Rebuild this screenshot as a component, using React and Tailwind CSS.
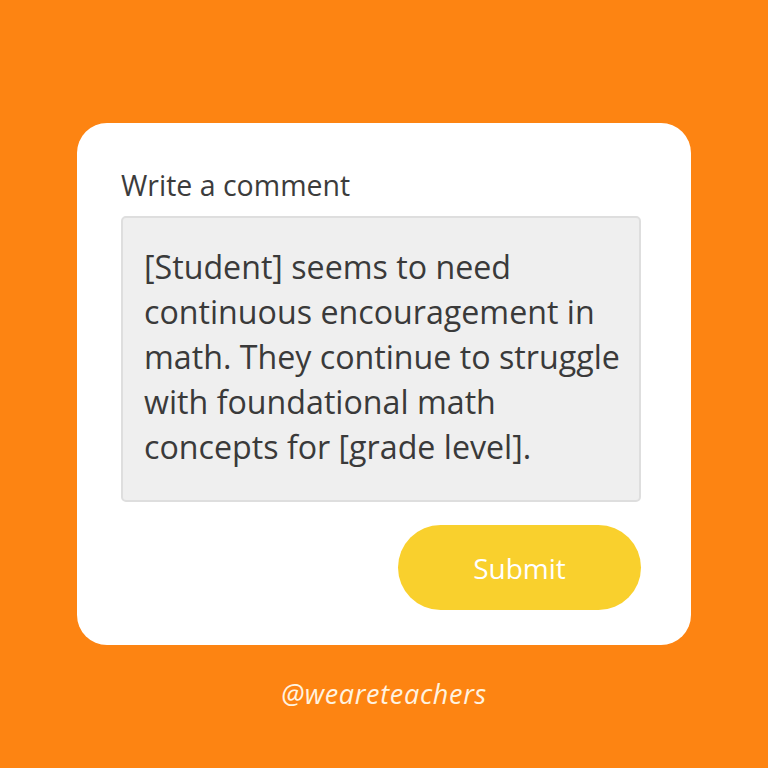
export default function App() {
  return (
    <div className="flex h-[768px] w-[768px] flex-col items-center bg-[#fd8412] pt-[123px] font-['Open_Sans',sans-serif]">
      <div className="w-[614px] rounded-[30px] bg-white pb-[35px] pl-[44px] pr-[50px] pt-[43px]">
        <label className="block text-[28.5px] leading-[38px] text-[#3c3c3c]">Write a comment</label>
        <div className="mt-[12px] h-[286px] rounded-[5px] border-2 border-[#dedede] bg-[#efefef] pl-[21px] pr-[12px] pt-[26px] text-[32.2px] leading-[45px] text-[#3a3a3a]">
          [Student] seems to need continuous encouragement in math. They continue to struggle with foundational math concepts for [grade level].
        </div>
        <div className="mt-[23px] flex justify-end">
          <button className="h-[85px] w-[243px] rounded-full bg-[#f9d02d] text-[28px] text-white">Submit</button>
        </div>
      </div>
      <p className="mt-[29px] text-[27px] italic tracking-wide text-[#fff3e0]">@weareteachers</p>
    </div>
  );
}
